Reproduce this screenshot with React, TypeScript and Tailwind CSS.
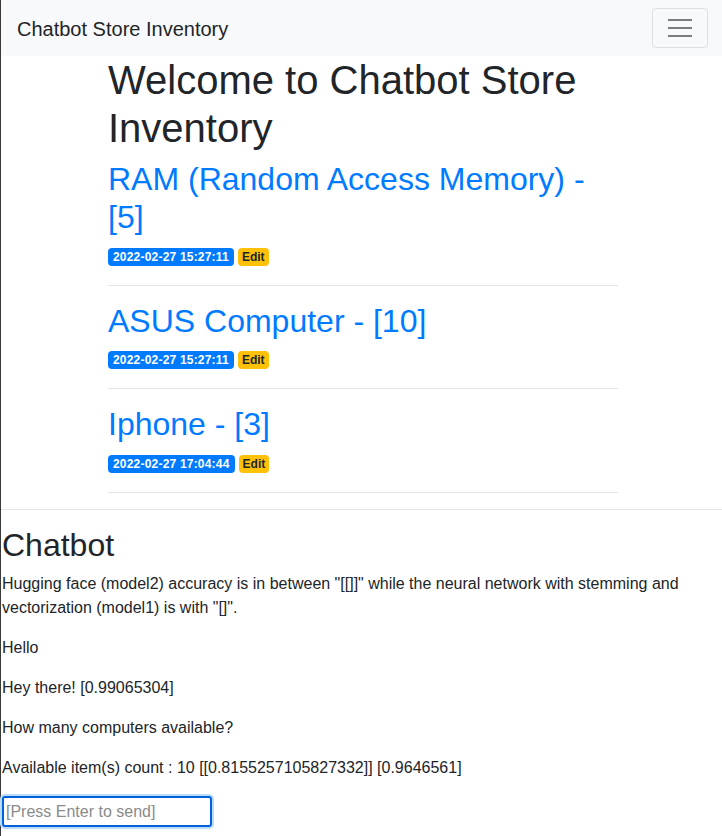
import { useState } from "react";

const items = [
  { name: "RAM (Random Access Memory)", qty: 5, date: "2022-02-27 15:27:11" },
  { name: "ASUS Computer", qty: 10, date: "2022-02-27 15:27:11" },
  { name: "Iphone", qty: 3, date: "2022-02-27 17:04:44" },
];

const messages = [
  "Hello",
  "Hey there! [0.99065304]",
  "How many computers available?",
  "Available item(s) count : 10 [[0.8155257105827332]] [0.9646561]",
];

function Navbar() {
  return (
    <nav className="flex h-14 items-center justify-between bg-[#f8f9fa] pl-4 pr-[14px]">
      <a href="#" className="pt-[6px] pb-[4px] text-[20px] leading-[30px] text-[#212529]">
        Chatbot Store Inventory
      </a>
      <button
        type="button"
        className="flex h-10 w-14 flex-col items-center justify-center gap-[6px] rounded-[4px] border border-black/10"
      >
        <span className="block h-[2px] w-6 bg-black/50" />
        <span className="block h-[2px] w-6 bg-black/50" />
        <span className="block h-[2px] w-6 bg-black/50" />
      </button>
    </nav>
  );
}

export default function App() {
  const [text, setText] = useState("");

  return (
    <div
      className="min-h-screen border-l border-[#3a3a3a] bg-white text-[16px] leading-6 text-[#212529]"
      style={{ fontFamily: '"Liberation Sans", Arial, sans-serif' }}
    >
      <Navbar />

      <div className="ml-[107px] w-[510px]">
        <h1 className="mb-2 text-[40px] leading-[48px]">Welcome to Chatbot Store Inventory</h1>
        {items.map((item) => (
          <div key={item.name}>
            <h2 className="mb-2 text-[32px] leading-[38.4px]">
              <a href="#" className="text-[#007bff]">
                {item.name} - [{item.qty}]
              </a>
            </h2>
            <div className="flex h-6 items-center gap-[4px]">
              <span className="rounded-[4px] bg-[#007bff] px-[5px] py-[3px] text-[12px] font-bold leading-3 tracking-[0.2px] text-white">
                {item.date}
              </span>
              <span className="rounded-[4px] bg-[#ffc107] px-[4px] py-[3px] text-[12px] font-bold leading-3 text-[#212529]">
                Edit
              </span>
            </div>
            <hr className="my-4 border-t border-black/10" />
          </div>
        ))}
      </div>

      <hr className="border-t border-black/10" />

      <div className="pt-4 pl-px">
        <h2 className="mb-2 text-[32px] leading-[38.4px]">Chatbot</h2>
        <p className="mb-4">
          Hugging face (model2) accuracy is in between "[[]]" while the neural network with stemming and
          vectorization (model1) is with "[]".
        </p>
        {messages.map((m) => (
          <p key={m} className="mb-4">
            {m}
          </p>
        ))}
        <input
          value={text}
          onChange={(e) => setText(e.target.value)}
          placeholder="[Press Enter to send]"
          autoFocus
          className="h-[31px] w-[210px] rounded-[3px] border-2 border-[#0060df] px-[2px] text-[16px] text-[#212529] shadow-[0_0_0_2px_#b9dcf7] outline-none placeholder:text-[#8a8a8a]"
        />
      </div>
    </div>
  );
}
